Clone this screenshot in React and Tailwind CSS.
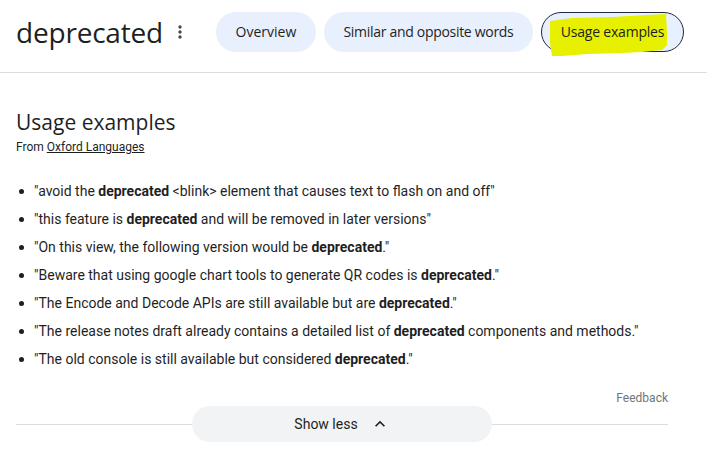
import React from "react";

const examples = [
  ["avoid the ", "deprecated", " <blink> element that causes text to flash on and off\""],
  ["this feature is ", "deprecated", " and will be removed in later versions\""],
  ["On this view, the following version would be ", "deprecated", ".\""],
  ["Beware that using google chart tools to generate QR codes is ", "deprecated", ".\""],
  ["The Encode and Decode APIs are still available but are ", "deprecated", ".\""],
  ["The release notes draft already contains a detailed list of ", "deprecated", " components and methods.\""],
  ["The old console is still available but considered ", "deprecated", ".\""],
];

export default function App() {
  return (
    <div className="w-[707px] h-[452px] bg-white overflow-hidden text-[#1f1f1f]" style={{ fontFamily: "Roboto, Arial, sans-serif" }}>
      {/* Header */}
      <div className="flex items-center h-[73px] pb-[9px] px-4 border-b border-[#dadce0]">
        <h1 className="shrink-0 whitespace-nowrap text-[28px] leading-[40px] text-[#1f1f1f] font-['Open_Sans',sans-serif] tracking-[-0.2px]">deprecated</h1>
        <button className="shrink-0 ml-[5px] w-6 h-6 flex items-center justify-center text-[#444746]">
          <svg width="20" height="20" viewBox="0 0 24 24" fill="currentColor">
            <circle cx="12" cy="6" r="2" />
            <circle cx="12" cy="12" r="2" />
            <circle cx="12" cy="18" r="2" />
          </svg>
        </button>
        <div className="flex shrink-0 whitespace-nowrap gap-[8px] ml-[24px] font-['Open_Sans',sans-serif] text-[14px] text-[#1f1f1f]">
          <span className="shrink-0 w-[100px] h-10 rounded-full bg-[#e8effd] flex items-center justify-center">Overview</span>
          <span className="shrink-0 w-[209px] h-10 rounded-full bg-[#e8effd] flex items-center justify-center tracking-[-0.3px]">Similar and opposite words</span>
          <span className="shrink-0 relative w-[143px] h-10 rounded-full bg-[#e8effd] border border-[#1f2a44] flex items-center justify-center tracking-[-0.2px]">
            <svg className="absolute left-0 top-0 overflow-visible" width="143" height="40" viewBox="0 0 143 40">
              <polygon
                fill="#e6f000"
                points="8,8 30,5 70,4 105,2 124,1 125,20 125,32 120,37 100,39 80,40 45,41 20,43 10,43 8,30"
              />
            </svg>
            <span className="relative">Usage examples</span>
          </span>
        </div>
      </div>

      {/* Content */}
      <div className="pl-4 pr-[39px]">
        <h2 className="mt-[35px] text-[21px] leading-[28px] font-['Open_Sans',sans-serif] text-[#1f1f1f]">Usage examples</h2>
        <p className="text-[12px] leading-[16px] mt-[3px] text-[#1f1f1f]">
          From <span className="underline">Oxford Languages</span>
        </p>

        <ul className="mt-[22px] text-[14px] leading-[28px]">
          {examples.map((e, i) => (
            <li key={i} className="flex items-center">
              <span className="w-[5px] h-[5px] rounded-full bg-[#1f1f1f] ml-[3px] mr-[10px]" />
              <span>
                "{e[0]}
                <b className="font-bold">{e[1]}</b>
                {e[2]}
              </span>
            </li>
          ))}
        </ul>

        <div className="mt-[17px] flex justify-end text-[12px] leading-[16px] text-[#70757a]">Feedback</div>

        <div className="grid mt-[0px]">
          <div className="col-start-1 row-start-1 self-center h-px bg-[#dadce0]" />
          <button className="col-start-1 row-start-1 justify-self-center w-[300px] h-9 rounded-full bg-[#f1f3f4] flex items-center justify-center gap-[12px] text-[14px] text-[#1f1f1f]">
            <span>Show less</span>
            <svg width="20" height="20" viewBox="0 0 24 24" fill="currentColor">
              <path d="M12 8l-6 6 1.41 1.41L12 10.83l4.59 4.58L18 14z" />
            </svg>
          </button>
        </div>
      </div>
    </div>
  );
}
